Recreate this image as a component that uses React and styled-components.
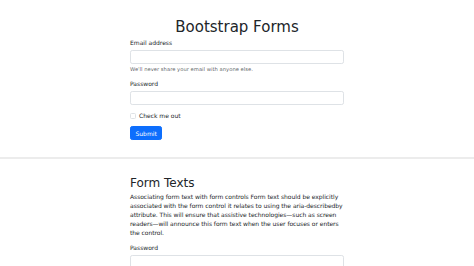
import styled, { createGlobalStyle } from "styled-components";

const GlobalStyle = createGlobalStyle`
  html, body {
    margin: 0;
    padding: 0;
    background: #fff;
  }
  body {
    font-family: "DejaVu Sans", "Liberation Sans", sans-serif;
    font-size: 6px;
    line-height: 1.5;
    color: #212529;
  }
  * {
    box-sizing: border-box;
  }
`;

const Page = styled.div`
  width: 474px;
  height: 266px;
  overflow: hidden;
`;

const Container = styled.section`
  width: 214px;
  margin: 0 auto;
  padding-top: ${({ $top }) => $top}px;
  padding-bottom: ${({ $bottom }) => $bottom || 0}px;
`;

const Title = styled.h1`
  margin: 0 0 2px;
  font-size: 15px;
  font-weight: 500;
  line-height: 1.2;
  text-align: center;
`;

const SubTitle = styled.h2`
  margin: 0 0 1px;
  font-size: 12px;
  font-weight: 500;
  line-height: 1.2;
`;

const Paragraph = styled.p`
  margin: 0 0 6px;
  letter-spacing: -0.04px;
`;

const Group = styled.div`
  margin-bottom: 6px;
`;

const Label = styled.label`
  display: block;
  margin-bottom: 3px;
`;

const TextInput = styled.input`
  display: block;
  width: 100%;
  height: 14px;
  padding: 2px 4.5px;
  font-family: inherit;
  font-size: 6px;
  color: #212529;
  background: #fff;
  border: 1px solid #dee2e6;
  border-radius: 2.25px;
  outline: none;
`;

const HelpText = styled.div`
  margin-top: 1.5px;
  font-size: 5.25px;
  color: rgba(33, 37, 41, 0.75);
`;

const Check = styled.div`
  display: flex;
  align-items: center;
  gap: 3px;
  min-height: 9px;
  margin-bottom: 6px;
`;

const CheckBox = styled.input`
  appearance: none;
  width: 6px;
  height: 6px;
  margin: 0;
  border: 1px solid #dee2e6;
  border-radius: 1.5px;
  background: #fff;
`;

const SubmitButton = styled.button`
  display: inline-block;
  height: 14px;
  padding: 0 4.5px;
  font-family: inherit;
  font-size: 6px;
  line-height: 1.5;
  color: #fff;
  background: #0d6efd;
  border: 1px solid #0d6efd;
  border-radius: 2.25px;
  cursor: pointer;
`;

const Divider = styled.hr`
  margin: 0;
  height: 2px;
  border: none;
  background: #ececec;
`;

const App = () => {
  return (
    <Page>
      <GlobalStyle />
      <Container $top={18} $bottom={17}>
        <Title>Bootstrap Forms</Title>
        <form onSubmit={(e) => e.preventDefault()}>
          <Group>
            <Label htmlFor="email">Email address</Label>
            <TextInput type="email" id="email" />
            <HelpText>We'll never share your email with anyone else.</HelpText>
          </Group>
          <Group>
            <Label htmlFor="password">Password</Label>
            <TextInput type="password" id="password" />
          </Group>
          <Check>
            <CheckBox type="checkbox" id="check" />
            <label htmlFor="check">Check me out</label>
          </Check>
          <SubmitButton type="submit">Submit</SubmitButton>
        </form>
      </Container>
      <Divider />
      <Container $top={17}>
        <SubTitle>Form Texts</SubTitle>
        <Paragraph>
          Associating form text with form controls Form text should be
          explicitly associated with the form control it relates to using the
          aria-describedby attribute. This will ensure that assistive
          technologies—such as screen readers—will announce this form text when
          the user focuses or enters the control.
        </Paragraph>
        <Group>
          <Label htmlFor="password2">Password</Label>
          <TextInput type="password" id="password2" />
        </Group>
      </Container>
    </Page>
  );
};

export default App;
